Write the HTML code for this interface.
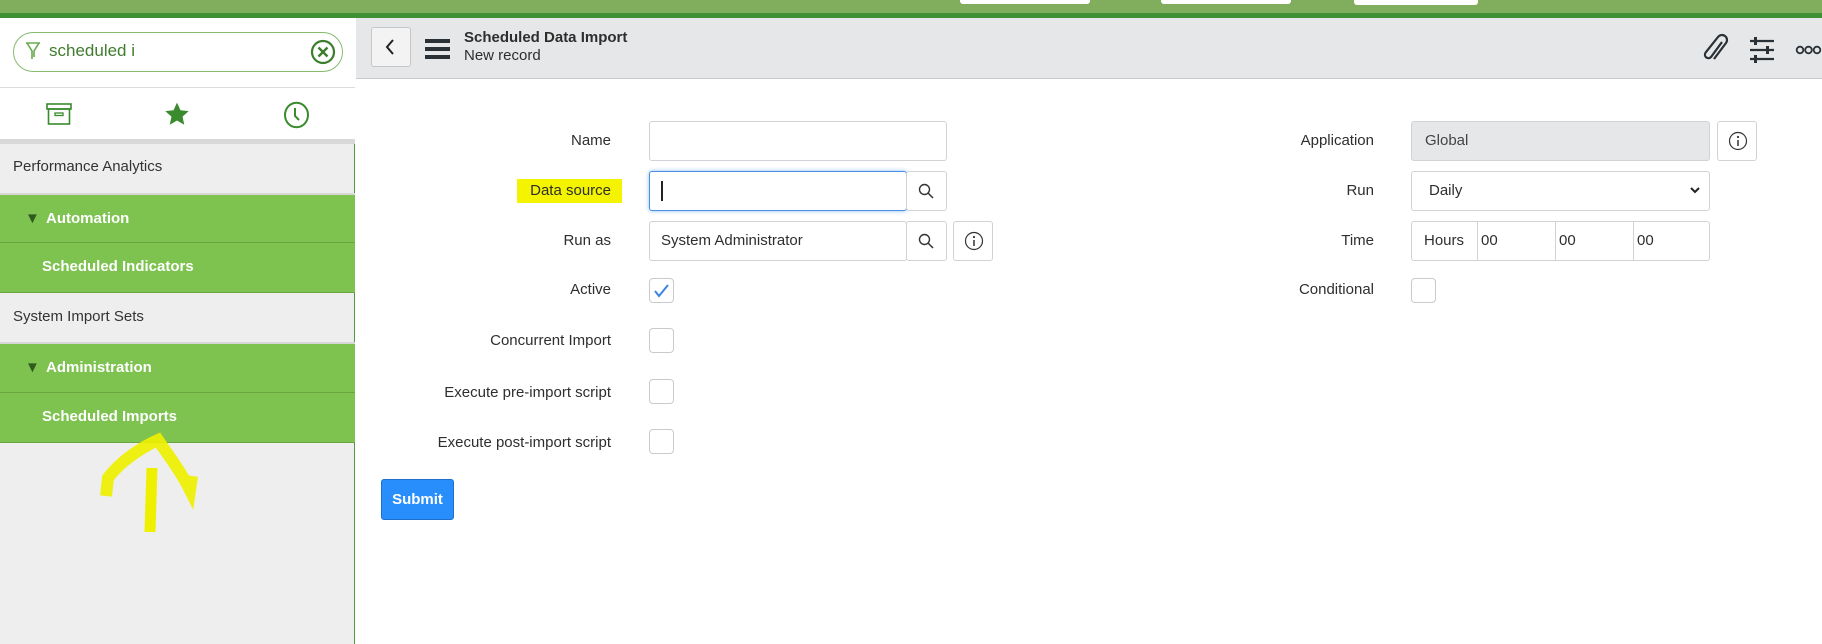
<!DOCTYPE html>
<html><head><meta charset="utf-8"><style>
*{box-sizing:border-box;margin:0;padding:0}
body{width:1822px;height:644px;overflow:hidden;background:#fff;font-family:"Liberation Sans",sans-serif;color:#2e2e2e;position:relative}
.a{position:absolute}
.lbl{position:absolute;font-size:15px;text-align:right;color:#2e2e2e}
.inp{position:absolute;border:1px solid #cfd3d6;border-radius:3px;background:#fff;font-size:15px}
.cb{position:absolute;width:25px;height:25px;border:1px solid #c8cbce;border-radius:4px;background:#fff}
.band{position:absolute;left:0;width:355px;background:#7ec24f;border-bottom:1px solid #6aa640;color:#fff;font-size:15px}
</style></head><body>
<div class="a" style="left:0;top:0;width:1822px;height:13px;background:#80ae5c"></div>
<div class="a" style="left:960px;top:0;width:130px;height:4px;background:#fff;border-radius:0 0 3px 3px"></div>
<div class="a" style="left:1161px;top:0;width:130px;height:4px;background:#fff;border-radius:0 0 3px 3px"></div>
<div class="a" style="left:1354px;top:0;width:124px;height:5px;background:#fff;border-radius:0 0 3px 3px"></div>
<div class="a" style="left:0;top:13px;width:1822px;height:5px;background:#3f8f33"></div>

<div class="a" style="left:0;top:18px;width:355px;height:626px;background:#eeeeee;border-right:1px solid #4f9a3c"></div>
<div class="a" style="left:0;top:18px;width:355px;height:121px;background:#fff"></div>
<div class="a" style="left:13px;top:32px;width:330px;height:40px;border:1px solid #86bb6e;border-radius:20px;background:#fff"></div>
<svg class="a" style="left:24px;top:40px" width="18" height="24" viewBox="0 0 18 24"><path d="M2 3h14M3 3l5 8v8M15 3l-5 8v6" fill="none" stroke="#6aaa4e" stroke-width="1.6"/></svg>
<div class="a" style="left:49px;top:41px;font-size:17px;color:#3f7d2f">scheduled i</div>
<svg class="a" style="left:310px;top:39px" width="26" height="26"><circle cx="13" cy="13" r="11" fill="none" stroke="#3a7d2c" stroke-width="2.2"/><path d="M8.5 8.5l9 9M17.5 8.5l-9 9" stroke="#3a7d2c" stroke-width="2.4"/></svg>
<div class="a" style="left:0;top:87px;width:355px;height:1px;background:#dcdcdc"></div>
<svg class="a" style="left:46px;top:103px" width="26" height="22"><rect x="1" y="1" width="24" height="5" fill="none" stroke="#3a8a2e" stroke-width="1.6"/><rect x="2.5" y="6" width="21" height="15" fill="none" stroke="#3a8a2e" stroke-width="1.6"/><rect x="9" y="10" width="8" height="2.5" fill="none" stroke="#3a8a2e" stroke-width="1.3"/></svg>
<svg class="a" style="left:164px;top:101px" width="26" height="26" viewBox="0 0 24 24"><path d="M12 1.5l3.2 7 7.6.8-5.7 5.1 1.6 7.5L12 18l-6.7 3.9 1.6-7.5L1.2 9.3l7.6-.8z" fill="#3a8a2e"/></svg>
<svg class="a" style="left:283px;top:101px" width="27" height="28"><ellipse cx="13.5" cy="14" rx="11.5" ry="12.2" fill="none" stroke="#3a8a2e" stroke-width="2"/><path d="M12 7v8l4 4" fill="none" stroke="#3a8a2e" stroke-width="2"/></svg>
<div class="a" style="left:0;top:139px;width:355px;height:5px;background:#d8d8d8"></div>
<div class="a" style="left:13px;top:158px;font-size:15px;color:#333">Performance Analytics</div>
<div class="band" style="top:193px;height:50px;border-top:2px solid #d6d6d6"><span style="position:absolute;left:25px;top:15px;color:#2f5a1d;font-size:15px">▼</span><span style="position:absolute;left:46px;top:15px;font-weight:bold">Automation</span></div>
<div class="band" style="top:243px;height:50px"><span style="position:absolute;left:42px;top:15px;font-weight:bold">Scheduled Indicators</span></div>
<div class="a" style="left:13px;top:308px;font-size:15px;color:#333">System Import Sets</div>
<div class="band" style="top:342px;height:51px;border-top:2px solid #d6d6d6"><span style="position:absolute;left:25px;top:15px;color:#2f5a1d;font-size:15px">▼</span><span style="position:absolute;left:46px;top:15px;font-weight:bold">Administration</span></div>
<div class="band" style="top:393px;height:50px"><span style="position:absolute;left:42px;top:15px;font-weight:bold">Scheduled Imports</span></div>
<svg class="a" style="left:0;top:0" width="355" height="644"><path d="M150 532 L152 468" fill="none" stroke="#eef000" stroke-width="11"/><path d="M106 496 L108 478 C120 462 140 448 158 440 C168 455 180 470 190 490 L192 476" fill="none" stroke="#eef000" stroke-width="12" opacity="0.92"/></svg>

<div class="a" style="left:356px;top:18px;width:1466px;height:61px;background:#e6e7e8;border-bottom:1px solid #c8c9ca"></div>
<div class="a" style="left:371px;top:27px;width:40px;height:40px;border:1px solid #c5c7c9;border-radius:3px;background:#f3f3f3"></div>
<svg class="a" style="left:383px;top:37px" width="14" height="20"><path d="M10 3L4 10l6 7" fill="none" stroke="#222" stroke-width="2"/></svg>
<div class="a" style="left:425px;top:39px;width:25px;height:4px;background:#293036"></div>
<div class="a" style="left:425px;top:47px;width:25px;height:4px;background:#293036"></div>
<div class="a" style="left:425px;top:55px;width:25px;height:4px;background:#293036"></div>
<div class="a" style="left:464px;top:29px;font-size:15px;font-weight:bold;color:#2e2e2e">Scheduled Data Import</div>
<div class="a" style="left:464px;top:47px;font-size:15px;color:#2e2e2e">New record</div>
<svg class="a" style="left:1700px;top:33px" width="30" height="32" viewBox="0 0 30 32"><path d="M22 9L11 24a3.5 3.5 0 0 1-5.5-4.3L18 4a5 5 0 0 1 8 6L14 26" fill="none" stroke="#293036" stroke-width="2.2"/></svg>
<svg class="a" style="left:1749px;top:36px" width="26" height="28"><path d="M1 5h24M1 14h24M1 23h24" stroke="#293036" stroke-width="2.2"/><rect x="5" y="1" width="3" height="8" fill="#293036"/><rect x="17" y="10" width="3" height="8" fill="#293036"/><rect x="5" y="19" width="3" height="8" fill="#293036"/></svg>
<svg class="a" style="left:1795px;top:44px" width="27" height="12"><circle cx="5" cy="6" r="3.3" fill="none" stroke="#293036" stroke-width="1.8"/><circle cx="13.5" cy="6" r="3.3" fill="none" stroke="#293036" stroke-width="1.8"/><circle cx="22" cy="6" r="3.3" fill="none" stroke="#293036" stroke-width="1.8"/></svg>

<div class="lbl" style="left:380px;width:231px;top:132px">Name</div>
<div class="inp" style="left:649px;top:121px;width:298px;height:40px"></div>
<div class="a" style="left:517px;top:179px;width:105px;height:24px;background:#f4f400"></div>
<div class="lbl" style="left:380px;width:231px;top:182px">Data source</div>
<div class="inp" style="left:649px;top:171px;width:258px;height:40px;border:1px solid #4a90e2;box-shadow:0 0 4px #8fbcf3"></div>
<div class="a" style="left:661px;top:181px;width:2px;height:20px;background:#222"></div>
<div class="inp" style="left:906px;top:171px;width:41px;height:40px"></div>
<svg class="a" style="left:918px;top:183px" width="17" height="17"><circle cx="6.5" cy="6.5" r="5" fill="none" stroke="#333" stroke-width="1.4"/><path d="M10 10l5 5" stroke="#333" stroke-width="1.5"/></svg>
<div class="lbl" style="left:380px;width:231px;top:232px">Run as</div>
<div class="inp" style="left:649px;top:221px;width:258px;height:40px;padding:10px 11px">System Administrator</div>
<div class="inp" style="left:906px;top:221px;width:41px;height:40px"></div>
<svg class="a" style="left:918px;top:233px" width="17" height="17"><circle cx="6.5" cy="6.5" r="5" fill="none" stroke="#333" stroke-width="1.4"/><path d="M10 10l5 5" stroke="#333" stroke-width="1.5"/></svg>
<div class="inp" style="left:953px;top:221px;width:40px;height:40px"></div>
<svg class="a" style="left:964px;top:231px" width="20" height="20"><circle cx="10" cy="10" r="8.5" fill="none" stroke="#333" stroke-width="1.2"/><circle cx="10" cy="6" r="1.1" fill="#333"/><path d="M10 9v6" stroke="#333" stroke-width="1.5"/></svg>
<div class="lbl" style="left:380px;width:231px;top:281px">Active</div>
<div class="cb" style="left:649px;top:278px"></div>
<svg class="a" style="left:651px;top:281px" width="20" height="20"><path d="M4 10l4 5 9-11" fill="none" stroke="#3a86e0" stroke-width="2"/></svg>
<div class="lbl" style="left:380px;width:231px;top:332px">Concurrent Import</div>
<div class="cb" style="left:649px;top:328px"></div>
<div class="lbl" style="left:380px;width:231px;top:384px">Execute pre-import script</div>
<div class="cb" style="left:649px;top:379px"></div>
<div class="lbl" style="left:380px;width:231px;top:434px">Execute post-import script</div>
<div class="cb" style="left:649px;top:429px"></div>
<div class="a" style="left:381px;top:479px;width:73px;height:41px;background:#278efc;border:1px solid #1f6fcc;border-radius:3px;color:#fff;font-weight:bold;font-size:15px;text-align:center;line-height:39px">Submit</div>

<div class="lbl" style="left:1200px;width:174px;top:132px">Application</div>
<div class="inp" style="left:1411px;top:121px;width:299px;height:40px;background:#e6e7e8;padding:10px 13px;color:#444">Global</div>
<div class="inp" style="left:1717px;top:121px;width:40px;height:40px"></div>
<svg class="a" style="left:1728px;top:131px" width="20" height="20"><circle cx="10" cy="10" r="8.5" fill="none" stroke="#333" stroke-width="1.2"/><circle cx="10" cy="6" r="1.1" fill="#333"/><path d="M10 9v6" stroke="#333" stroke-width="1.5"/></svg>
<div class="lbl" style="left:1200px;width:174px;top:182px">Run</div>
<div class="inp" style="left:1411px;top:171px;width:299px;height:40px;padding:10px 17px">Daily</div>
<svg class="a" style="left:1689px;top:186px" width="12" height="10"><path d="M2 2l4 4 4-4" fill="none" stroke="#222" stroke-width="2"/></svg>
<div class="lbl" style="left:1200px;width:174px;top:232px">Time</div>
<div class="inp" style="left:1411px;top:221px;width:299px;height:40px"></div>
<div class="a" style="left:1424px;top:232px;font-size:15px">Hours</div>
<div class="a" style="left:1477px;top:222px;width:1px;height:38px;background:#cfd3d6"></div>
<div class="a" style="left:1555px;top:222px;width:1px;height:38px;background:#cfd3d6"></div>
<div class="a" style="left:1633px;top:222px;width:1px;height:38px;background:#cfd3d6"></div>
<div class="a" style="left:1481px;top:232px;font-size:15px">00</div>
<div class="a" style="left:1559px;top:232px;font-size:15px">00</div>
<div class="a" style="left:1637px;top:232px;font-size:15px">00</div>
<div class="lbl" style="left:1200px;width:174px;top:281px">Conditional</div>
<div class="cb" style="left:1411px;top:278px"></div>
</body></html>
